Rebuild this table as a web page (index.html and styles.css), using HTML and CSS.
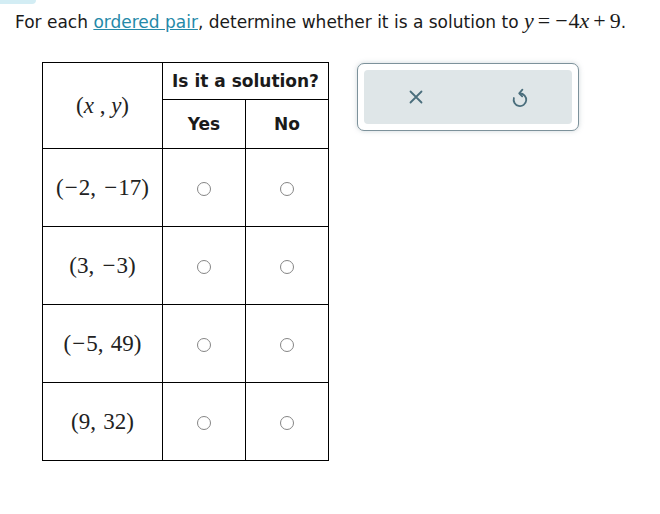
FILE: index.html
```html
<!DOCTYPE html>
<html>
<head>
<meta charset="utf-8">
<link rel="stylesheet" href="styles.css">
</head>
<body>
<div class="tab"></div>
<p class="question">For each <a class="term" href="#">ordered pair</a>, determine whether it is a solution to <span class="math"><i>y</i><span class="op">=</span><span class="neg">−</span>4<i>x</i><span class="op">+</span>9</span>.</p>
<div class="main">
  <table class="grid">
    <colgroup><col class="c1"><col class="c2"><col class="c3"></colgroup>
    <tr class="head1">
      <td rowspan="2" class="math cellmath">(<i>x</i> , <i>y</i>)</td>
      <th colspan="2">Is it a solution?</th>
    </tr>
    <tr class="head2"><th>Yes</th><th>No</th></tr>
    <tr class="row"><td class="math cellmath">(<span class="neg">−</span>2,<span class="gap"></span><span class="neg">−</span>17)</td><td><input type="radio" name="r1"></td><td><input type="radio" name="r1"></td></tr>
    <tr class="row"><td class="math cellmath">(3,<span class="gap"></span><span class="neg">−</span>3)</td><td><input type="radio" name="r2"></td><td><input type="radio" name="r2"></td></tr>
    <tr class="row"><td class="math cellmath">(<span class="neg">−</span>5,<span class="gap"></span>49)</td><td><input type="radio" name="r3"></td><td><input type="radio" name="r3"></td></tr>
    <tr class="row"><td class="math cellmath">(9,<span class="gap"></span>32)</td><td><input type="radio" name="r4"></td><td><input type="radio" name="r4"></td></tr>
  </table>
  <div class="panel">
    <div class="tools">
      <button class="tool" aria-label="Clear">
        <svg width="14" height="14" viewBox="0 0 14 14"><path d="M1.5 1.5 L12.5 12.5 M12.5 1.5 L1.5 12.5" stroke="#4a6e7c" stroke-width="1.8" fill="none" stroke-linecap="round"/></svg>
      </button>
      <button class="tool" aria-label="Undo">
        <svg width="18" height="22" viewBox="0 0 18 22"><path d="M9 7.5 A6.3 6.3 0 1 1 2.9 12" stroke="#4a6e7c" stroke-width="1.8" fill="none" stroke-linecap="round"/><path d="M11.4 3.6 L8.2 7.3 L11.2 10.4" stroke="#4a6e7c" stroke-width="1.8" fill="none" stroke-linecap="round" stroke-linejoin="round"/></svg>
      </button>
    </div>
  </div>
</div>
</body>
</html>
```
FILE: styles.css
```css
html, body { margin: 0; padding: 0; background: #fff; }
body { font-family: "DejaVu Sans", Verdana, sans-serif; color: #1a1a1a; }
.tab { width: 36px; height: 4px; background: #d3edf4; border-bottom-right-radius: 6px; }
.question { margin: 5px 0 0 15px; font-size: 17px; line-height: 24px; }
.term { color: #2589a8; text-decoration: underline; }
.math { font-family: "Liberation Serif", "Times New Roman", serif; }
.question .math { font-size: 22px; }
.op { margin: 0 4px; }
.neg { margin: 0 1px; }
.main { display: flex; align-items: flex-start; margin: 28px 0 0 42px; }
.grid { border-collapse: collapse; table-layout: fixed; width: 286px; }
.c1 { width: 120px; } .c2 { width: 83px; } .c3 { width: 83px; }
.grid td, .grid th { border: 1px solid #000; text-align: center; padding: 0; }
.grid th { font-weight: bold; font-size: 17px; color: #1a1a1a; }
.head1 { height: 37px; }
.head2 { height: 49px; }
.row { height: 78px; }
.cellmath { font-size: 23px; color: #222; }
.gap { display: inline-block; width: 0.32em; }
.grid input[type=radio] { -webkit-appearance: none; appearance: none; margin: 0; width: 14px; height: 14px; border: 1px solid #858585; border-radius: 50%; background: #fff; vertical-align: middle; }
.panel { margin-left: 28px; margin-top: 1px; width: 208px; padding: 6px; border: 1px solid #7d929b; border-radius: 7px; box-shadow: 0 0 5px rgba(120,140,150,0.35); background: #fff; }
.tools { display: flex; background: #dfe6e8; border-radius: 4px; height: 54px; }
.tool { flex: 1; border: 0; background: transparent; display: flex; align-items: center; justify-content: center; padding: 0; }
```
